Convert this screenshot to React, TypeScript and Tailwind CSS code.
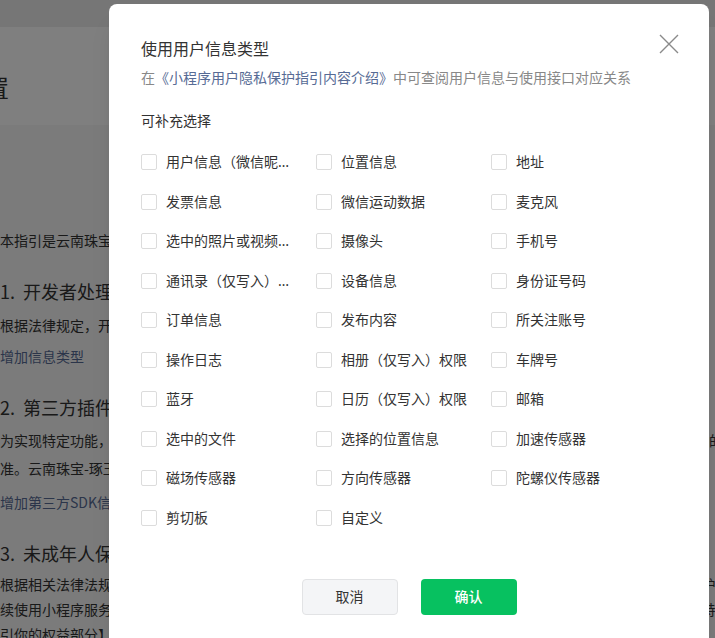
import React from 'react'

const font = { fontFamily: '"Noto Sans CJK SC", "Noto Sans", sans-serif' }
// Latin font first so the truncation ellipsis sits on the baseline
const itemFont = { fontFamily: '"Noto Sans", "Noto Sans CJK SC", sans-serif' }

const options = [
  '用户信息（微信昵称、头像）',
  '位置信息',
  '地址',
  '发票信息',
  '微信运动数据',
  '麦克风',
  '选中的照片或视频信息',
  '摄像头',
  '手机号',
  '通讯录（仅写入）权限',
  '设备信息',
  '身份证号码',
  '订单信息',
  '发布内容',
  '所关注账号',
  '操作日志',
  '相册（仅写入）权限',
  '车牌号',
  '蓝牙',
  '日历（仅写入）权限',
  '邮箱',
  '选中的文件',
  '选择的位置信息',
  '加速传感器',
  '磁场传感器',
  '方向传感器',
  '陀螺仪传感器',
  '剪切板',
  '自定义',
]

const App: React.FC = () => {
  return (
    <div className="relative h-[638px] w-[715px] overflow-hidden bg-[#f6f6f6] text-[#333]" style={font}>
      {/* 背后的页面 */}
      <div className="h-[27px] bg-[#ececec]" />
      <div className="h-[98px] bg-white flex items-start pt-[46px] overflow-hidden">
        <div className="-ml-[87px] text-[24px] leading-[28px] whitespace-nowrap">隐私设置</div>
      </div>
      <div className="flex flex-col whitespace-nowrap overflow-hidden text-[14px]">
        <div className="mt-[105px] leading-5">本指引是云南珠宝-琢玉坊小程序开发者为处理你的个人信息而制定。</div>
        <div className="mt-[28px] text-[18px] leading-[26px]">1.&nbsp;&nbsp;开发者处理的信息</div>
        <div className="mt-[11px] leading-5">根据法律规定，开发者仅处理实现小程序功能所必要的信息。</div>
        <div className="mt-[11px] leading-5 text-[#576b95]">增加信息类型</div>
        <div className="mt-[28px] text-[18px] leading-[26px]">2.&nbsp;&nbsp;第三方插件信息/SDK信息</div>
        <div className="mt-[6px] leading-7">为实现特定功能，开发者可能会接入由第三方提供的插件/SDK。第三方插件/SDK的个人信息处理规则，请以其公示的官方说明为</div>
        <div className="leading-7">准。云南珠宝-琢玉坊小程序接入的第三方插件信息/SDK信息如下：</div>
        <div className="mt-[10px] leading-5 text-[#576b95]">增加第三方SDK信息</div>
        <div className="mt-[28px] text-[18px] leading-[26px]">3.&nbsp;&nbsp;未成年人保护</div>
        <div className="mt-[6px] leading-[25px]">根据相关法律法规的规定，若你是未满14周岁的未成年人，你需要和你的监护人共同仔细阅读本指引，并在征得监护人同意后继用户</div>
        <div className="leading-[25px]">续使用小程序服务。若你是已满14周岁的未成年人，你的监护人需要为你提供同意。请你监护人仔细阅读本指引，特别是本指引中填</div>
        <div className="leading-[25px]">引你的权益部分】</div>
      </div>

      {/* 遮罩 */}
      <div className="absolute inset-0 bg-black/50" />

      {/* 弹窗 */}
      <div className="absolute left-[109px] top-[4px] w-[600px] rounded-lg bg-white shadow-xl px-8 pt-8 pb-8">
        <button className="absolute right-[30px] top-[30px] w-5 h-5 flex items-center justify-center">
          <svg width="20" height="20" viewBox="0 0 20 20" fill="none" stroke="#8a8a8a" strokeWidth="1.4">
            <path d="M1 1L19 19M19 1L1 19" />
          </svg>
        </button>

        <div className="text-[16px] leading-6 text-[#333]">使用用户信息类型</div>
        <div className="mt-[7px] text-[14px] leading-5 text-[#888]">
          在<span className="text-[#576b95]">《小程序用户隐私保护指引内容介绍》</span>中可查阅用户信息与使用接口对应关系
        </div>
        <div className="mt-[23px] text-[14px] leading-5 text-[#333]">可补充选择</div>

        <div className="mt-[21px] grid grid-cols-[175px_175px_175px] gap-y-[17.5px]">
          {options.map((item) => (
            <label key={item} className="flex items-center gap-[9px] h-[22px]">
              <span className="w-4 h-4 shrink-0 rounded-[2px] border border-[#dcdcdc] bg-white" />
              <span className="max-w-[128px] truncate text-[14px] leading-[22px] text-[#333]" style={itemFont}>
                {item}
              </span>
            </label>
          ))}
        </div>

        <div className="mt-[50px] flex justify-center gap-[23px]">
          <button className="w-[96px] h-9 rounded border border-[#e2e3e5] bg-[#f4f5f7] text-[14px] text-[#333]">
            取消
          </button>
          <button className="w-[96px] h-9 rounded bg-[#07c160] text-[14px] font-medium text-white">
            确认
          </button>
        </div>
      </div>
    </div>
  )
}

export default App
